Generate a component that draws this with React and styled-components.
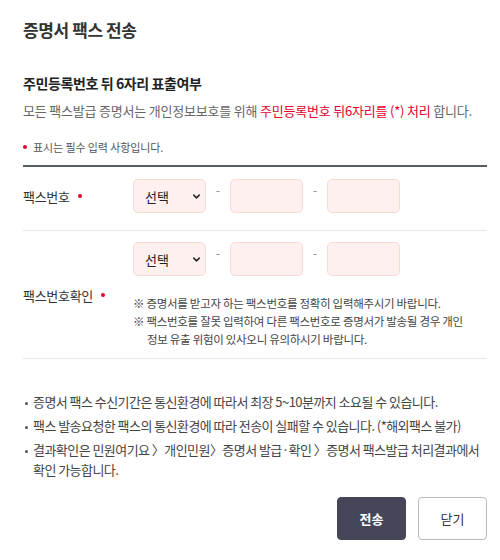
import React from 'react'
import styled, { createGlobalStyle } from 'styled-components'
import { ChevronDown } from 'lucide-react'

const GlobalStyle = createGlobalStyle`
  html, body {
    margin: 0;
    padding: 0;
    background: #fff;
  }
  body {
    font-family: "Noto Sans CJK KR", "Noto Sans", sans-serif;
    color: #333;
    word-break: keep-all;
  }
`

const Modal = styled.div`
  width: 500px;
  height: 560px;
  box-sizing: border-box;
  padding: 17px 13px 0 23px;
`

const Title = styled.h2`
  margin: 0;
  font-size: 17px;
  font-weight: 700;
  letter-spacing: -0.4px;
  line-height: 26px;
  color: #333;
`

const SubTitle = styled.h3`
  margin: 30px 0 0;
  font-size: 14px;
  font-weight: 700;
  letter-spacing: -0.4px;
  line-height: 20px;
  color: #222;
`

const Desc = styled.p`
  margin: 8px 0 0;
  font-size: 13px;
  letter-spacing: -0.2px;
  line-height: 20px;
  color: #666;
`

const Red = styled.span`
  color: #e4002b;
`

const Dot = styled.span`
  display: inline-block;
  width: 4px;
  height: 4px;
  border-radius: 50%;
  background: #e4002b;
  margin: ${p => p.$gap || '0 6px 0 0'};
  vertical-align: middle;
`

const Required = styled.p`
  margin: 18px 0 0;
  font-size: 11px;
  letter-spacing: -0.1px;
  line-height: 16px;
  color: #555;
  display: flex;
  align-items: center;
`

const Form = styled.div`
  margin-top: 10px;
  border-top: 2px solid #555a66;
`

const Row = styled.div`
  display: grid;
  grid-template-columns: 110px 1fr;
  align-items: center;
  border-bottom: 1px solid #e5e5e5;
  padding: ${p => p.$pad};
`

const Label = styled.div`
  font-size: 13px;
  letter-spacing: -0.3px;
  color: #333;
  display: flex;
  align-items: center;
`

const Field = styled.div`
  display: flex;
  flex-direction: column;
`

const Inputs = styled.div`
  display: flex;
  align-items: flex-start;
`

const SelectWrap = styled.div`
  position: relative;
  width: 73px;
  height: 34px;
`

const Select = styled.select`
  appearance: none;
  width: 100%;
  height: 100%;
  box-sizing: border-box;
  border: 1px solid #fbd9d5;
  border-radius: 5px;
  background: #fff0f0;
  padding: 0 0 0 11px;
  font-family: inherit;
  font-size: 13px;
  color: #222;
  outline: none;
`

const Chevron = styled(ChevronDown)`
  position: absolute;
  right: 4px;
  top: 12px;
  pointer-events: none;
  color: #222;
`

const Dash = styled.span`
  width: 24px;
  text-align: center;
  font-size: 13px;
  line-height: 16px;
  color: #999;
  padding-top: 3px;
`

const Input = styled.input`
  width: 73px;
  height: 34px;
  box-sizing: border-box;
  border: 1px solid #fbd9d5;
  border-radius: 5px;
  background: #fff0f0;
  outline: none;
`

const Notes = styled.ul`
  list-style: none;
  margin: 18px 0 0;
  padding: 0;
`

const Note = styled.li`
  font-size: 11.5px;
  letter-spacing: -0.3px;
  line-height: 18px;
  color: #444;
  padding-left: 14px;
  text-indent: -14px;
  padding-right: 10px;
`

const Info = styled.ul`
  list-style: none;
  margin: 33px 0 0;
  padding: 0;
`

const InfoItem = styled.li`
  position: relative;
  font-size: 13px;
  letter-spacing: -0.55px;
  line-height: 20px;
  color: #444;
  padding-left: 10px;
  margin-bottom: 4px;
  &::before {
    content: '';
    position: absolute;
    left: 2px;
    top: 10px;
    width: 3px;
    height: 3px;
    border-radius: 50%;
    background: #555;
  }
`

const Buttons = styled.div`
  display: flex;
  justify-content: flex-end;
  gap: 12px;
  margin-top: 17px;
`

const Button = styled.button`
  width: 69px;
  height: 43px;
  border-radius: 4px;
  font-family: inherit;
  font-size: 13px;
  font-weight: ${p => (p.$primary ? 700 : 400)};
  color: ${p => (p.$primary ? '#fff' : '#333')};
  background: ${p => (p.$primary ? '#454759' : '#fff')};
  border: 1px solid ${p => (p.$primary ? '#454759' : '#b5b8bf')};
  cursor: pointer;
`

const PhoneInputs = () => (
  <Inputs>
    <SelectWrap>
      <Select defaultValue="">
        <option value="">선택</option>
        <option value="02">02</option>
        <option value="031">031</option>
      </Select>
      <Chevron size={11} strokeWidth={3.2} />
    </SelectWrap>
    <Dash>-</Dash>
    <Input type="text" />
    <Dash>-</Dash>
    <Input type="text" />
  </Inputs>
)

const App = () => {
  return (
    <Modal>
      <GlobalStyle />
      <Title>증명서 팩스 전송</Title>

      <SubTitle>주민등록번호 뒤 6자리 표출여부</SubTitle>
      <Desc>
        모든 팩스발급 증명서는 개인정보보호를 위해 <Red>주민등록번호 뒤6자리를 (*) 처리</Red> 합니다.
      </Desc>

      <Required><Dot />표시는 필수 입력 사항입니다.</Required>

      <Form>
        <Row $pad="12px 0 17px">
          <Label>팩스번호<Dot $gap="0 0 0 8px" /></Label>
          <PhoneInputs />
        </Row>
        <Row $pad="11px 0 10px">
          <Label>팩스번호확인<Dot $gap="0 0 0 8px" /></Label>
          <Field>
            <PhoneInputs />
            <Notes>
              <Note>※ 증명서를 받고자 하는 팩스번호를 정확히 입력해주시기 바랍니다.</Note>
              <Note>※ 팩스번호를 잘못 입력하여 다른 팩스번호로 증명서가 발송될 경우 개인 정보 유출 위험이 있사오니 유의하시기 바랍니다.</Note>
            </Notes>
          </Field>
        </Row>
      </Form>

      <Info>
        <InfoItem>증명서 팩스 수신기간은 통신환경에 따라서 최장 5~10분까지 소요될 수 있습니다.</InfoItem>
        <InfoItem>팩스 발송요청한 팩스의 통신환경에 따라 전송이 실패할 수 있습니다. (*해외팩스 불가)</InfoItem>
        <InfoItem>결과확인은 민원여기요 〉개인민원〉증명서 발급·확인 〉증명서 팩스발급 처리결과에서 확인 가능합니다.</InfoItem>
      </Info>

      <Buttons>
        <Button $primary>전송</Button>
        <Button>닫기</Button>
      </Buttons>
    </Modal>
  )
}

export default App
